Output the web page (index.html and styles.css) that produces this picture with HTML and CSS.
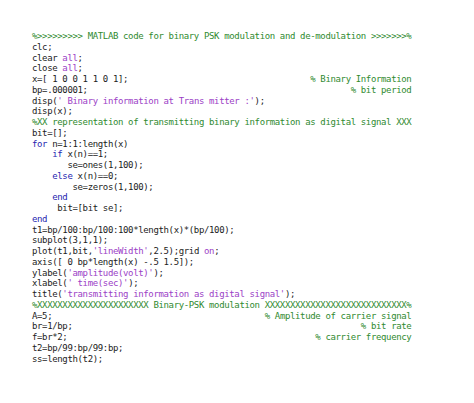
FILE: index.html
```html
<!DOCTYPE html>
<html>
<head>
<meta charset="utf-8">
<link rel="stylesheet" href="styles.css">
</head>
<body>
<div class="code">
<div class="ln"><span class="cm">%&gt;&gt;&gt;&gt;&gt;&gt;&gt;&gt;&gt; MATLAB code for binary PSK modulation and de-modulation &gt;&gt;&gt;&gt;&gt;&gt;&gt;%</span></div>
<div class="ln">clc;</div>
<div class="ln">clear <span class="str">all</span>;</div>
<div class="ln">close <span class="str">all</span>;</div>
<div class="ln">x=[ 1 0 0 1 1 0 1];                                    <span class="cm">% Binary Information</span></div>
<div class="ln">bp=.000001;                                                    <span class="cm">% bit period</span></div>
<div class="ln">disp(<span class="str">' Binary information at Trans mitter :'</span>);</div>
<div class="ln">disp(x);</div>
<div class="ln"><span class="cm">%XX representation of transmitting binary information as digital signal XXX</span></div>
<div class="ln">bit=[];</div>
<div class="ln"><span class="kw">for</span> n=1:1:length(x)</div>
<div class="ln">    <span class="kw">if</span> x(n)==1;</div>
<div class="ln">       se=ones(1,100);</div>
<div class="ln">    <span class="kw">else</span> x(n)==0;</div>
<div class="ln">        se=zeros(1,100);</div>
<div class="ln">    <span class="kw">end</span></div>
<div class="ln">     bit=[bit se];</div>
<div class="ln"><span class="kw">end</span></div>
<div class="ln">t1=bp/100:bp/100:100*length(x)*(bp/100);</div>
<div class="ln">subplot(3,1,1);</div>
<div class="ln">plot(t1,bit,<span class="str">'lineWidth'</span>,2.5);grid <span class="str">on</span>;</div>
<div class="ln">axis([ 0 bp*length(x) -.5 1.5]);</div>
<div class="ln">ylabel(<span class="str">'amplitude(volt)'</span>);</div>
<div class="ln">xlabel(<span class="str">' time(sec)'</span>);</div>
<div class="ln">title(<span class="str">'transmitting information as digital signal'</span>);</div>
<div class="ln"><span class="cm">%XXXXXXXXXXXXXXXXXXXXXX Binary-PSK modulation XXXXXXXXXXXXXXXXXXXXXXXXXXXX%</span></div>
<div class="ln">A=5;                                          <span class="cm">% Amplitude of carrier signal</span></div>
<div class="ln">br=1/bp;                                                         <span class="cm">% bit rate</span></div>
<div class="ln">f=br*2;                                                 <span class="cm">% carrier frequency</span></div>
<div class="ln">t2=bp/99:bp/99:bp;</div>
<div class="ln">ss=length(t2);</div>
</div>
</body>
</html>
```

FILE: styles.css
```css
html, body {
  margin: 0;
  padding: 0;
  background: #ffffff;
}

body {
  padding: 31px 0 0 32px;
}

.code {
  display: flex;
  flex-direction: column;
  font-family: "DejaVu Sans Mono", "Liberation Mono", monospace;
  font-size: 9px;
  letter-spacing: -0.36px;
  color: #1c1c1c;
}

.ln {
  height: 10.75px;
  line-height: 10.75px;
  white-space: pre;
}

.cm {
  color: #2f8a2f;
}

.str {
  color: #9b3ec6;
}

.kw {
  color: #1f1fb0;
}
```
